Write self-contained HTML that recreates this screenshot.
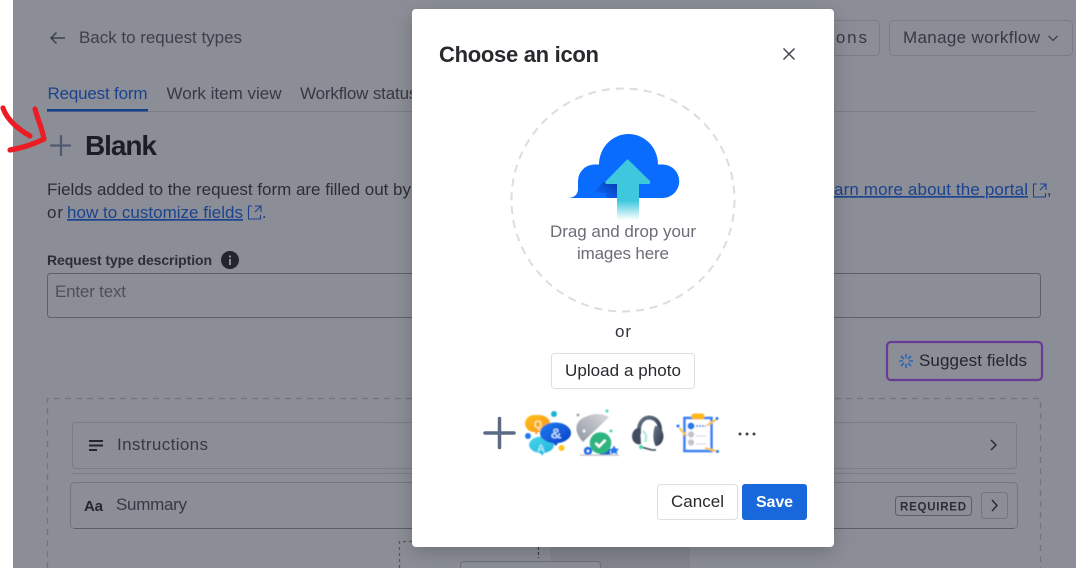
<!DOCTYPE html>
<html><head><meta charset="utf-8"><title>Choose an icon</title>
<style>
html,body{margin:0;padding:0;width:1076px;height:568px;overflow:hidden;background:#fff}
svg{display:block;font-family:"Liberation Sans",sans-serif}
</style></head><body>
<svg width="1076" height="568" viewBox="0 0 1076 568" xmlns="http://www.w3.org/2000/svg">
<defs>
<filter id="sh" x="-20%" y="-20%" width="140%" height="140%"><feDropShadow dx="0" dy="6" stdDeviation="10" flood-color="#000" flood-opacity=".2"/></filter>
<filter id="b" x="-10%" y="-10%" width="120%" height="120%"><feGaussianBlur stdDeviation=".4"/></filter>
<linearGradient id="ar" x1="0" y1="0" x2="0" y2="1"><stop offset="0" stop-color="#3dc8dd"/><stop offset=".68" stop-color="#3dc8dd"/><stop offset="1" stop-color="#3dc8dd" stop-opacity="0"/></linearGradient>
<linearGradient id="sd" x1="1" y1="0" x2="0" y2="1"><stop offset="0" stop-color="#0638a8"/><stop offset="1" stop-color="#0b5fe8" stop-opacity=".4"/></linearGradient>
<linearGradient id="or" x1="0" y1="0" x2="1" y2="1"><stop offset="0" stop-color="#ffc21f"/><stop offset="1" stop-color="#f98c1c"/></linearGradient>
<linearGradient id="bl" x1="0" y1="0" x2="1" y2="1"><stop offset="0" stop-color="#1c7cf2"/><stop offset="1" stop-color="#0b3fc4"/></linearGradient>
<linearGradient id="te" x1="0" y1="0" x2="1" y2="1"><stop offset="0" stop-color="#48d6ea"/><stop offset="1" stop-color="#20b2dd"/></linearGradient>
<linearGradient id="gy" x1="1" y1="0" x2="0" y2="1"><stop offset="0" stop-color="#d8dade"/><stop offset="1" stop-color="#9097a0"/></linearGradient>
<linearGradient id="hs" x1="0" y1="0" x2="1" y2="1"><stop offset="0" stop-color="#69758a"/><stop offset="1" stop-color="#2d3648"/></linearGradient>
</defs>

<rect x="13" y="0" width="1063" height="568" fill="#8b8e96"/>

<!-- back -->
<path d="M65 38H51M56.500 32.500L51 38l5.500 5.500" fill="none" stroke="#3c4048" stroke-width="1.500"/>
<text x="79" y="43" font-size="17" fill="#3d404a" textLength="163">Back to request types</text>

<!-- top buttons -->
<rect x="780" y="20.500" width="99.500" height="35" rx="4" fill="none" stroke="#7a7d86"/>
<text x="800" y="43" font-size="17" fill="#363943" textLength="67">Actions</text>
<rect x="889.500" y="20.500" width="183" height="35" rx="4" fill="none" stroke="#7a7d86"/>
<text x="903" y="43" font-size="17" fill="#363943" textLength="137">Manage workflow</text>
<path d="M1048.500 36l4.500 4.500 4.500-4.500" fill="none" stroke="#3c4048" stroke-width="1.300"/>

<!-- tabs -->
<rect x="47" y="111" width="988" height="1" fill="#797c85"/>
<text x="47.500" y="99" font-size="17" fill="#1b438f" textLength="100">Request form</text>
<rect x="47" y="109" width="101" height="2.500" fill="#143f8c"/>
<text x="166.500" y="99" font-size="17" fill="#363943" textLength="115">Work item view</text>
<text x="300" y="99" font-size="17" fill="#363943" textLength="135">Workflow statuses</text>

<!-- title -->
<path d="M61 136v19M51 145.500h19" stroke="#4f5a72" stroke-width="2.200" fill="none" stroke-linecap="round"/>
<text x="85" y="155" font-size="28" font-weight="700" fill="#1b1e27" textLength="72">Blank</text>

<!-- paragraph -->
<text x="47" y="195" font-size="17" fill="#2c2e36" textLength="364">Fields added to the request form are filled out by</text>
<text x="834" y="195" font-size="17" fill="#1b438f" textLength="194" text-decoration="underline">arn more about the portal</text>
<path d="M1037 184h-3.500v13h12v-4M1040 184h6v6M1046 184l-6 6" fill="none" stroke="#1b438f" stroke-width="1.100"/>
<text x="1047" y="195" font-size="16" fill="#2c2e36">,</text>
<text x="47" y="218" font-size="17" fill="#2c2e36" textLength="16">or</text>
<text x="67" y="218" font-size="17" fill="#1b438f" textLength="176" text-decoration="underline">how to customize fields</text>
<path d="M252 206h-3.500v13h12v-4M255 206h6v6M261 206l-6 6" fill="none" stroke="#1b438f" stroke-width="1.100"/>
<text x="262" y="218" font-size="16" fill="#2c2e36">.</text>

<!-- description -->
<text x="47" y="265" font-size="14" font-weight="700" fill="#2c2e36" textLength="165">Request type description</text>
<circle cx="230" cy="260" r="9" fill="#22252d"/>
<rect x="229" y="259" width="2" height="6" fill="#8b8e96"/><rect x="229" y="255.500" width="2" height="2" fill="#8b8e96"/>
<rect x="47.500" y="273.500" width="993" height="44" rx="3" fill="none" stroke="#5d6069"/>
<text x="55" y="297" font-size="17" fill="#4d505a" textLength="71">Enter text</text>

<!-- suggest -->
<rect x="887" y="342" width="155" height="38" rx="4" fill="none" stroke="#6a3a97" stroke-width="2.200"/>
<g stroke="#2f62b3" stroke-width="1.600" fill="none"><path d="M906 354v4M906 364v4M899 361h4M909 361h4M901 356l3 3M908 363l3 3M911 356l-3 3M904 363l-3 3"/></g>
<text x="919" y="366" font-size="17" fill="#23262f" textLength="108">Suggest fields</text>

<!-- dashed area -->
<path d="M47.500 568V398.500H1040.500V568" fill="none" stroke="#72757e" stroke-width="1.300" stroke-dasharray="6 5"/>
<rect x="72.500" y="422.500" width="944" height="46" rx="3" fill="none" stroke="#797c85"/>
<rect x="72" y="473" width="945" height="1" fill="#797c85"/>
<path d="M89 441h14M89 445.500h14M89 450h8" stroke="#23262f" stroke-width="2" fill="none"/>
<text x="117" y="450" font-size="17" fill="#363943" textLength="91">Instructions</text>
<path d="M991 440l5 5-5 5" fill="none" stroke="#23262f" stroke-width="1.400"/>

<rect x="70.500" y="482.500" width="947" height="46" rx="4" fill="none" stroke="#73767f"/>
<path d="M74 528.500H1014" stroke="#5b5e67" stroke-width="1"/>
<text x="84" y="511" font-size="15" font-weight="700" fill="#23262f" textLength="19">Aa</text>
<text x="116" y="510" font-size="17" fill="#363943" textLength="71">Summary</text>
<rect x="895.500" y="496.500" width="76" height="19" rx="3" fill="none" stroke="#5d6069"/>
<text x="900" y="510.500" font-size="11.500" font-weight="700" fill="#2a2d36" textLength="66">REQUIRED</text>
<rect x="981.500" y="492.500" width="26" height="26" rx="3" fill="none" stroke="#73767f"/>
<path d="M992 500l5 5.500-5 5.500" fill="none" stroke="#23262f" stroke-width="1.400"/>

<!-- below -->
<path d="M399.500 568V541.500H415" fill="none" stroke="#55585f" stroke-width="1.300" stroke-dasharray="3 3"/>
<path d="M538.500 547V558" stroke="#3e4149" stroke-width="1.200" stroke-dasharray="3 2"/>
<rect x="550" y="547" width="140" height="21" fill="#83868e"/>
<rect x="460.500" y="561.500" width="140" height="20" rx="3" fill="#8b8e96" stroke="#6d7079"/>

<!-- red arrow -->
<g fill="none" stroke="#ec1c24" stroke-width="5.200" stroke-linecap="round" stroke-linejoin="round">
<path d="M3 108C7 120 18 129 30 136"/>
<path d="M35 109C38 120 42 128 44 139C34 144 22 148 10 150"/>
</g>

<!-- modal -->
<rect x="412" y="9" width="422" height="538" rx="4" fill="#fff" filter="url(#sh)"/>
<text x="439" y="62" font-size="22" font-weight="700" fill="#292a2e" textLength="160">Choose an icon</text>
<path d="M783.500 48.500l11 11M794.500 48.500l-11 11" stroke="#44474e" stroke-width="1.500" fill="none"/>

<circle cx="623" cy="200" r="111.500" fill="none" stroke="#dddddd" stroke-width="2" stroke-dasharray="8 6"/>
<path d="M568 198Q577 197.500 578 190V181A16.500 16.500 0 0 1 594.500 164.500H599A29.500 30.500 0 0 1 658 164.500H662.500A16.750 16.750 0 0 1 662.500 198Z" fill="#0a6cff"/>
<path d="M595 192l8-10 14 2v14h-11v-5z" fill="url(#sd)"/>
<path d="M627.500 159L650 181Q651 184 648 184H639V220H617V184H607Q604 184 606 181Z" fill="url(#ar)"/>
<text x="550" y="237" font-size="17" fill="#6b6e76" textLength="146">Drag and drop your</text>
<text x="577" y="259" font-size="17" fill="#6b6e76" textLength="92">images here</text>
<text x="615" y="337" font-size="17" fill="#33353b" textLength="16">or</text>

<rect x="551.500" y="353.500" width="143" height="35" rx="3" fill="#fff" stroke="#dcdfe4"/>
<text x="565" y="376" font-size="17" fill="#292a2e" textLength="116">Upload a photo</text>

<!-- icon row -->
<path d="M499.500 418.500v29M485 433h29" stroke="#5c6a85" stroke-width="3.500" stroke-linecap="round" fill="none"/>
<g filter="url(#b)">
<circle cx="554" cy="414" r="3" fill="#1fb2d3"/><circle cx="528" cy="436" r="3" fill="#1c7cf2"/><circle cx="561.500" cy="448" r="3" fill="#ffc21f"/>
<path d="M534 415h5a11 8.500 0 0 1 0 17h-1l-2 3-1-3h-1a9 8.500 0 0 1 0-17z" fill="url(#or)"/>
<text x="538" y="428" font-size="11" font-weight="700" fill="#ffe7a8" text-anchor="middle">Q</text>
<path d="M529 445a12.500 8.500 0 0 1 25 0a12.500 8.500 0 0 1-10 8l-2 2.500-2-2.500a12.500 8.500 0 0 1-11-8z" fill="url(#te)"/>
<text x="541" y="452" font-size="11" font-weight="700" fill="#aeeaf5" text-anchor="middle">A</text>
<path d="M540 433a15.500 10.500 0 0 1 31 0a15.500 10 0 0 1-13 10l-2 3-3-3a15.500 10 0 0 1-13-10z" fill="url(#bl)"/>
<text x="556" y="438.500" font-size="15" font-weight="700" fill="#b9d8ff" text-anchor="middle">&amp;</text>

<path d="M583 442C573 431 575 421 585 417C593 413 602 413 609 417Z" fill="url(#gy)"/>
<circle cx="578" cy="415" r="1.500" fill="#a7abb3"/>
<circle cx="584" cy="431" r="1.500" fill="#f4f5f6"/>
<circle cx="607" cy="411" r="1.500" fill="#44d7b6"/><circle cx="611" cy="431" r="1.500" fill="#44d7b6"/>
<circle cx="588" cy="451" r="4.200" fill="#1c6fe8"/><circle cx="588" cy="451" r="1.300" fill="#fff"/>
<rect x="600" y="449" width="10" height="5.500" fill="#1d5fd0"/>
<path d="M614 445.500l1.700 3 3.300.5-2.300 2.200.6 3.300-3.300-1.600-3.300 1.600.6-3.300-2.300-2.200 3.300-.5z" fill="#2878ee"/>
<rect x="580" y="454.500" width="39" height="1.200" fill="#b9bcc4"/>
<circle cx="600.500" cy="443" r="10.800" fill="#2fb57f"/>
<path d="M595.500 443l3.500 3.500 6.500-6.500" stroke="#fff" stroke-width="2.400" fill="none"/>

<path d="M639 434V430C639 421 645 417.500 649 417.500C654 417.500 660 421 660 430V434" fill="none" stroke="url(#hs)" stroke-width="4"/>
<path d="M640 428a7 9 0 0 0-8 8 7 8 0 0 0 9 8z" fill="#424c60"/>
<path d="M655 426a8 11 0 0 1 8.500 10 8 10 0 0 1-8 10q-4-9-.5-20z" fill="url(#hs)"/>
<path d="M643 431c3 2 4 6 2 11" stroke="#7ce0c0" stroke-width="2.500" fill="none" opacity=".6"/>
<path d="M641 447l11 3h4" stroke="#3d4658" stroke-width="1.500" fill="none"/>
<circle cx="641" cy="447" r="2" fill="#4ed8a8"/>

<rect x="684.500" y="418" width="27" height="33" fill="#fff" stroke="#3b82f6" stroke-width="2.600"/>
<rect x="691.500" y="413.500" width="13" height="6" rx="2.500" fill="#ffb81f"/>
<circle cx="691" cy="426" r="3.500" fill="#2878ee"/>
<path d="M696 426h10" stroke="#2878ee" stroke-width="1.400" stroke-dasharray="2 1"/>
<circle cx="691" cy="434.500" r="3.200" fill="#c2c4ca"/><path d="M696 436h10" stroke="#cfd1d6" stroke-width="1"/>
<circle cx="691" cy="442.500" r="3.200" fill="#c2c4ca"/><path d="M696 444h10" stroke="#cfd1d6" stroke-width="1"/>
<path d="M707 425.500l9-6" stroke="#ffc23d" stroke-width="2"/><circle cx="717" cy="418.500" r="1.500" fill="#2878ee"/>
<path d="M679.500 428l7 8" stroke="#ffc23d" stroke-width="2"/><circle cx="678" cy="426" r="1.500" fill="#2878ee"/>
<path d="M705 448l11 3" stroke="#ffc23d" stroke-width="2"/><circle cx="717.500" cy="451.500" r="1.500" fill="#2878ee"/>
</g>
<circle cx="740" cy="434" r="1.500" fill="#44464d"/><circle cx="747" cy="434" r="1.500" fill="#44464d"/><circle cx="754" cy="434" r="1.500" fill="#44464d"/>

<!-- actions -->
<rect x="657.500" y="484.500" width="80" height="35" rx="3" fill="#fff" stroke="#dcdfe4"/>
<text x="671" y="507" font-size="17" fill="#292a2e" textLength="53">Cancel</text>
<rect x="742" y="484" width="65" height="36" rx="3" fill="#1868db"/>
<text x="756" y="507" font-size="16" font-weight="700" fill="#fff" textLength="37">Save</text>
</svg>
</body></html>
